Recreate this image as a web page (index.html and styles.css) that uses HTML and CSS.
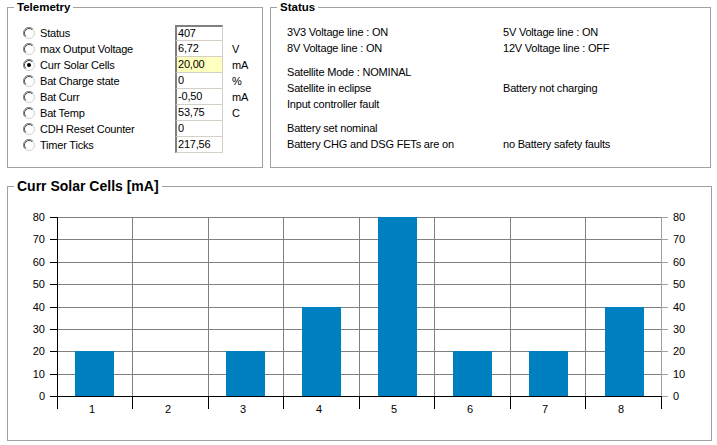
FILE: index.html
```html
<!DOCTYPE html>
<html>
<head>
<meta charset="utf-8">
<link rel="stylesheet" href="styles.css">
</head>
<body>
<div class="top">
  <fieldset class="group telemetry">
    <legend>Telemetry</legend>
    <div class="rows">
      <div class="row">
        <svg class="radio" viewBox="0 0 12 12"><circle cx="6" cy="6" r="5.5" fill="#fff" stroke="#d4d0c8"/><path d="M2.11 9.89 A5.5 5.5 0 0 1 9.89 2.11" fill="none" stroke="#808080"/><path d="M2.82 9.18 A4.5 4.5 0 0 1 9.18 2.82" fill="none" stroke="#505050"/></svg>
        <span class="label">Status</span><span class="edit">407</span><span class="unit"></span>
      </div>
      <div class="row">
        <svg class="radio" viewBox="0 0 12 12"><circle cx="6" cy="6" r="5.5" fill="#fff" stroke="#d4d0c8"/><path d="M2.11 9.89 A5.5 5.5 0 0 1 9.89 2.11" fill="none" stroke="#808080"/><path d="M2.82 9.18 A4.5 4.5 0 0 1 9.18 2.82" fill="none" stroke="#505050"/></svg>
        <span class="label">max Output Voltage</span><span class="edit">6,72</span><span class="unit">V</span>
      </div>
      <div class="row">
        <svg class="radio" viewBox="0 0 12 12"><circle cx="6" cy="6" r="5.5" fill="#fff" stroke="#d4d0c8"/><path d="M2.11 9.89 A5.5 5.5 0 0 1 9.89 2.11" fill="none" stroke="#808080"/><path d="M2.82 9.18 A4.5 4.5 0 0 1 9.18 2.82" fill="none" stroke="#505050"/><circle cx="6" cy="6" r="2" fill="#000"/></svg>
        <span class="label">Curr Solar Cells</span><span class="edit active">20,00</span><span class="unit">mA</span>
      </div>
      <div class="row">
        <svg class="radio" viewBox="0 0 12 12"><circle cx="6" cy="6" r="5.5" fill="#fff" stroke="#d4d0c8"/><path d="M2.11 9.89 A5.5 5.5 0 0 1 9.89 2.11" fill="none" stroke="#808080"/><path d="M2.82 9.18 A4.5 4.5 0 0 1 9.18 2.82" fill="none" stroke="#505050"/></svg>
        <span class="label">Bat Charge state</span><span class="edit">0</span><span class="unit">%</span>
      </div>
      <div class="row">
        <svg class="radio" viewBox="0 0 12 12"><circle cx="6" cy="6" r="5.5" fill="#fff" stroke="#d4d0c8"/><path d="M2.11 9.89 A5.5 5.5 0 0 1 9.89 2.11" fill="none" stroke="#808080"/><path d="M2.82 9.18 A4.5 4.5 0 0 1 9.18 2.82" fill="none" stroke="#505050"/></svg>
        <span class="label">Bat Curr</span><span class="edit">-0,50</span><span class="unit">mA</span>
      </div>
      <div class="row">
        <svg class="radio" viewBox="0 0 12 12"><circle cx="6" cy="6" r="5.5" fill="#fff" stroke="#d4d0c8"/><path d="M2.11 9.89 A5.5 5.5 0 0 1 9.89 2.11" fill="none" stroke="#808080"/><path d="M2.82 9.18 A4.5 4.5 0 0 1 9.18 2.82" fill="none" stroke="#505050"/></svg>
        <span class="label">Bat Temp</span><span class="edit">53,75</span><span class="unit">C</span>
      </div>
      <div class="row">
        <svg class="radio" viewBox="0 0 12 12"><circle cx="6" cy="6" r="5.5" fill="#fff" stroke="#d4d0c8"/><path d="M2.11 9.89 A5.5 5.5 0 0 1 9.89 2.11" fill="none" stroke="#808080"/><path d="M2.82 9.18 A4.5 4.5 0 0 1 9.18 2.82" fill="none" stroke="#505050"/></svg>
        <span class="label">CDH Reset Counter</span><span class="edit">0</span><span class="unit"></span>
      </div>
      <div class="row">
        <svg class="radio" viewBox="0 0 12 12"><circle cx="6" cy="6" r="5.5" fill="#fff" stroke="#d4d0c8"/><path d="M2.11 9.89 A5.5 5.5 0 0 1 9.89 2.11" fill="none" stroke="#808080"/><path d="M2.82 9.18 A4.5 4.5 0 0 1 9.18 2.82" fill="none" stroke="#505050"/></svg>
        <span class="label">Timer Ticks</span><span class="edit">217,56</span><span class="unit"></span>
      </div>
    </div>
  </fieldset>

  <fieldset class="group status">
    <legend>Status</legend>
    <div class="status-body">
      <div class="sgroup">
        <span>3V3 Voltage line : ON</span><span>5V Voltage line : ON</span>
        <span>8V Voltage line : ON</span><span>12V Voltage line : OFF</span>
      </div>
      <div class="sgroup">
        <span>Satellite Mode : NOMINAL</span><span></span>
        <span>Satellite in eclipse</span><span>Battery not charging</span>
        <span>Input controller fault</span><span></span>
      </div>
      <div class="sgroup">
        <span>Battery set nominal</span><span></span>
        <span>Battery CHG and DSG FETs are on</span><span>no Battery safety faults</span>
      </div>
    </div>
  </fieldset>
</div>

<fieldset class="group chart">
  <legend>Curr Solar Cells [mA]</legend>
  <svg class="plot" viewBox="8 195 703 245" width="703" height="245">
    <g fill="#808080">
      <rect x="58" y="217" width="603" height="1"/>
      <rect x="58" y="239" width="603" height="1"/>
      <rect x="58" y="262" width="603" height="1"/>
      <rect x="58" y="284" width="603" height="1"/>
      <rect x="58" y="307" width="603" height="1"/>
      <rect x="58" y="329" width="603" height="1"/>
      <rect x="58" y="351" width="603" height="1"/>
      <rect x="58" y="374" width="603" height="1"/>
      <rect x="132" y="218" width="1" height="178"/>
      <rect x="208" y="218" width="1" height="178"/>
      <rect x="283" y="218" width="1" height="178"/>
      <rect x="359" y="218" width="1" height="178"/>
      <rect x="434" y="218" width="1" height="178"/>
      <rect x="510" y="218" width="1" height="178"/>
      <rect x="585" y="218" width="1" height="178"/>
    </g>
    <g fill="#0080c0">
      <rect x="75" y="351" width="39" height="45"/>
      <rect x="226" y="351" width="39" height="45"/>
      <rect x="302" y="307" width="39" height="89"/>
      <rect x="378" y="217" width="39" height="179"/>
      <rect x="453" y="351" width="39" height="45"/>
      <rect x="529" y="351" width="39" height="45"/>
      <rect x="605" y="307" width="39" height="89"/>
    </g>
    <g fill="#a0a0a0">
      <rect x="661" y="217" width="1" height="179"/>
      <rect x="662" y="217" width="6" height="1"/>
      <rect x="662" y="239" width="6" height="1"/>
      <rect x="662" y="262" width="6" height="1"/>
      <rect x="662" y="284" width="6" height="1"/>
      <rect x="662" y="307" width="6" height="1"/>
      <rect x="662" y="329" width="6" height="1"/>
      <rect x="662" y="351" width="6" height="1"/>
      <rect x="662" y="374" width="6" height="1"/>
      <rect x="662" y="396" width="6" height="1"/>
    </g>
    <g fill="#000">
      <rect x="57" y="217" width="1" height="180"/>
      <rect x="50" y="217" width="7" height="1"/>
      <rect x="50" y="239" width="7" height="1"/>
      <rect x="50" y="262" width="7" height="1"/>
      <rect x="50" y="284" width="7" height="1"/>
      <rect x="50" y="307" width="7" height="1"/>
      <rect x="50" y="329" width="7" height="1"/>
      <rect x="50" y="351" width="7" height="1"/>
      <rect x="50" y="374" width="7" height="1"/>
      <rect x="50" y="396" width="7" height="1"/>
      <rect x="57" y="396" width="605" height="1"/>
      <rect x="57" y="397" width="1" height="12"/>
      <rect x="132" y="397" width="1" height="12"/>
      <rect x="208" y="397" width="1" height="12"/>
      <rect x="283" y="397" width="1" height="12"/>
      <rect x="359" y="397" width="1" height="12"/>
      <rect x="434" y="397" width="1" height="12"/>
      <rect x="510" y="397" width="1" height="12"/>
      <rect x="585" y="397" width="1" height="12"/>
      <rect x="661" y="397" width="1" height="12"/>
    </g>
    <g class="axis-text" text-anchor="end">
      <text x="45" y="221">80</text>
      <text x="45" y="243">70</text>
      <text x="45" y="266">60</text>
      <text x="45" y="288">50</text>
      <text x="45" y="311">40</text>
      <text x="45" y="333">30</text>
      <text x="45" y="355">20</text>
      <text x="45" y="378">10</text>
      <text x="45" y="400">0</text>
    </g>
    <g class="axis-text" text-anchor="start">
      <text x="673" y="221">80</text>
      <text x="673" y="243">70</text>
      <text x="673" y="266">60</text>
      <text x="673" y="288">50</text>
      <text x="673" y="311">40</text>
      <text x="673" y="333">30</text>
      <text x="673" y="355">20</text>
      <text x="673" y="378">10</text>
      <text x="673" y="400">0</text>
    </g>
    <g class="axis-text" text-anchor="middle">
      <text x="92" y="413">1</text>
      <text x="168" y="413">2</text>
      <text x="243" y="413">3</text>
      <text x="319" y="413">4</text>
      <text x="394" y="413">5</text>
      <text x="470" y="413">6</text>
      <text x="545" y="413">7</text>
      <text x="621" y="413">8</text>
    </g>
  </svg>
</fieldset>
</body>
</html>
```

FILE: styles.css
```css
* {
  box-sizing: border-box;
}

html,
body {
  margin: 0;
  background: #ffffff;
}

body {
  width: 717px;
  height: 445px;
  overflow: hidden;
  padding: 0 0 0 7px;
  font-family: "Liberation Sans", Arial, sans-serif;
  font-size: 11px;
  letter-spacing: -0.2px;
  color: #000000;
}

.top {
  display: flex;
  gap: 7px;
  width: 704px;
}

.group {
  margin: 0;
  padding: 0;
  min-width: 0;
  border: 1px solid #a0a0a0;
}

.group > legend {
  font-weight: bold;
  font-size: 11.5px;
  line-height: 15px;
  letter-spacing: 0;
  padding: 0 3px;
  margin-left: 6px;
}

.telemetry {
  width: 256px;
  flex: none;
}

.rows {
  padding: 10px 0 14px 15px;
}

.row {
  display: flex;
  align-items: center;
  height: 16px;
  line-height: 16px;
}

.radio {
  width: 12px;
  height: 12px;
  margin-right: 5px;
  flex: none;
}

.label {
  width: 135px;
  flex: none;
  white-space: nowrap;
}

.edit {
  width: 48px;
  height: 16px;
  flex: none;
  border-left: 2px solid #808080;
  border-right: 1px solid #d4d0c8;
  border-bottom: 1px solid #d4d0c8;
  padding-left: 1px;
  line-height: 15px;
}

.row:first-child .edit {
  border-top: 2px solid #808080;
  line-height: 13px;
}

.edit.active {
  background: #ffffc0;
}

.unit {
  margin-left: 9px;
}

.status {
  flex: 1;
}

.status-body {
  padding: 9px 0 0 16px;
}

.sgroup {
  display: grid;
  grid-template-columns: 216px auto;
  line-height: 16px;
  margin-bottom: 8px;
  white-space: nowrap;
}

.chart {
  width: 705px;
  margin-top: 10px;
}

.chart > legend {
  font-size: 14px;
  line-height: 17px;
}

.plot {
  display: block;
  width: 703px;
  height: 245px;
}

.axis-text {
  font-family: "Liberation Sans", Arial, sans-serif;
  font-size: 11px;
  letter-spacing: 0;
  fill: #000000;
}
```
